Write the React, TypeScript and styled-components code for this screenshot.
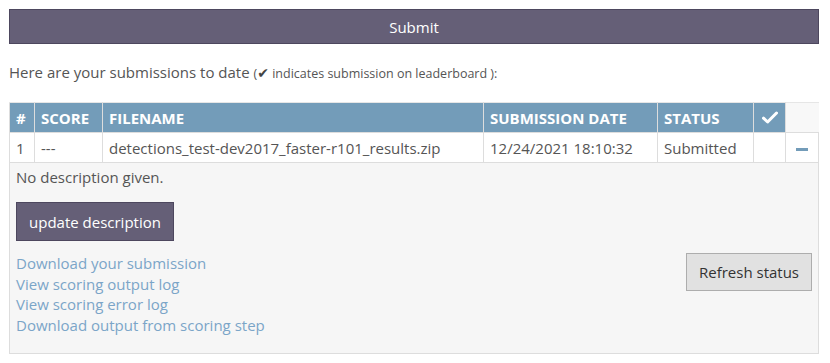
import React from "react";
import styled, { createGlobalStyle } from "styled-components";

const Global = createGlobalStyle`
  html, body { margin: 0; padding: 0; background: #fff; }
  body { font-family: "Open Sans", "Noto Sans", sans-serif; color: #555; }
`;

const Page = styled.div`
  padding: 9px 0 0 9px;
  width: 810px;
`;

const SubmitButton = styled.button`
  display: block;
  width: 810px;
  height: 35px;
  margin: 0;
  background: #655f77;
  border: 1px solid #4d475e;
  color: #fff;
  font-family: "Open Sans", sans-serif;
  font-size: 15px;
  padding: 0;
`;

const Intro = styled.p`
  margin: 18px 0 0 0;
  font-size: 15px;
  line-height: 20px;
  color: #555;
`;

const Small = styled.span`
  font-size: 12.5px;
`;

const Tick = styled.span`
  font-family: "DejaVu Sans", sans-serif;
  font-size: 14px;
  color: #444;
`;

const Table = styled.table`
  margin-top: 18px;
  width: 809px;
  border-collapse: collapse;
  table-layout: fixed;
  font-size: 15px;
`;

const Th = styled.th<{ $w: number; $blank?: boolean }>`
  width: ${(p) => p.$w}px;
  height: 30px;
  box-sizing: border-box;
  padding: 0 6px;
  text-align: left;
  font-weight: 700;
  font-size: 15px;
  color: #fff;
  background: ${(p) => (p.$blank ? "#f8f8f8" : "#739cb9")};
  border: 1px solid #ddd;
  border-top-color: #e6e6e6;
  ${(p) => (p.$blank ? "border-right-color: transparent;" : "")}
`;

const Td = styled.td<{ $center?: boolean }>`
  height: 30px;
  box-sizing: border-box;
  padding: 0 6px;
  border: 1px solid #ddd;
  color: #555;
  white-space: nowrap;
  text-align: ${(p) => (p.$center ? "center" : "left")};
`;

const Minus = styled.span`
  display: inline-block;
  width: 12px;
  height: 3px;
  background: #739cb9;
  vertical-align: middle;
`;

const CheckIcon = styled.svg`
  display: block;
  margin: 0 auto;
`;

const DescCell = styled.td`
  background: #f6f6f6;
  border: 1px solid #ddd;
  padding: 3px 6px 15px 6px;
  vertical-align: top;
  height: 191px;
  box-sizing: border-box;
`;

const DescText = styled.div`
  font-size: 15px;
  line-height: 22px;
`;

const UpdateButton = styled.button`
  margin-top: 14px;
  height: 39px;
  padding: 0 12px;
  background: #655f77;
  border: 1px solid #4d475e;
  color: #fff;
  font-family: "Open Sans", sans-serif;
  font-size: 15px;
`;

const LinksRow = styled.div`
  margin-top: 12px;
  display: flex;
  justify-content: space-between;
  align-items: flex-start;
`;

const Links = styled.div`
  display: flex;
  flex-direction: column;
`;

const Link = styled.a`
  color: #7ba5c8;
  text-decoration: none;
  font-size: 15px;
  line-height: 20.7px;
`;

const RefreshButton = styled.button`
  margin-top: 0;
  width: 126px;
  height: 38px;
  background: #e1e1e1;
  border: 1px solid #adadad;
  color: #333;
  font-family: "Open Sans", sans-serif;
  font-size: 15px;
  padding: 0;
`;

export default function App() {
  return (
    <>
      <Global />
      <Page>
        <SubmitButton>Submit</SubmitButton>
        <Intro>
          Here are your submissions to date{" "}
          <Small>
            (<Tick>✔</Tick> indicates submission on leaderboard ):
          </Small>
        </Intro>
        <Table>
          <thead>
            <tr>
              <Th $w={25}>#</Th>
              <Th $w={68}>SCORE</Th>
              <Th $w={381}>FILENAME</Th>
              <Th $w={174}>SUBMISSION DATE</Th>
              <Th $w={96}>STATUS</Th>
              <Th $w={32}>
                <CheckIcon width="16" height="13" viewBox="0 0 16 13">
                  <path
                    d="M1.5 7.2 L5.6 11 L14.5 2"
                    fill="none"
                    stroke="#fff"
                    strokeWidth="3"
                    strokeLinecap="round"
                    strokeLinejoin="round"
                  />
                </CheckIcon>
              </Th>
              <Th $w={33} $blank />
            </tr>
          </thead>
          <tbody>
            <tr>
              <Td>1</Td>
              <Td>---</Td>
              <Td>detections_test-dev2017_faster-r101_results.zip</Td>
              <Td>12/24/2021 18:10:32</Td>
              <Td>Submitted</Td>
              <Td />
              <Td $center>
                <Minus />
              </Td>
            </tr>
            <tr>
              <DescCell colSpan={7}>
                <DescText>No description given.</DescText>
                <UpdateButton>update description</UpdateButton>
                <LinksRow>
                  <Links>
                    <Link href="#">Download your submission</Link>
                    <Link href="#">View scoring output log</Link>
                    <Link href="#">View scoring error log</Link>
                    <Link href="#">Download output from scoring step</Link>
                  </Links>
                  <RefreshButton>Refresh status</RefreshButton>
                </LinksRow>
              </DescCell>
            </tr>
          </tbody>
        </Table>
      </Page>
    </>
  );
}
